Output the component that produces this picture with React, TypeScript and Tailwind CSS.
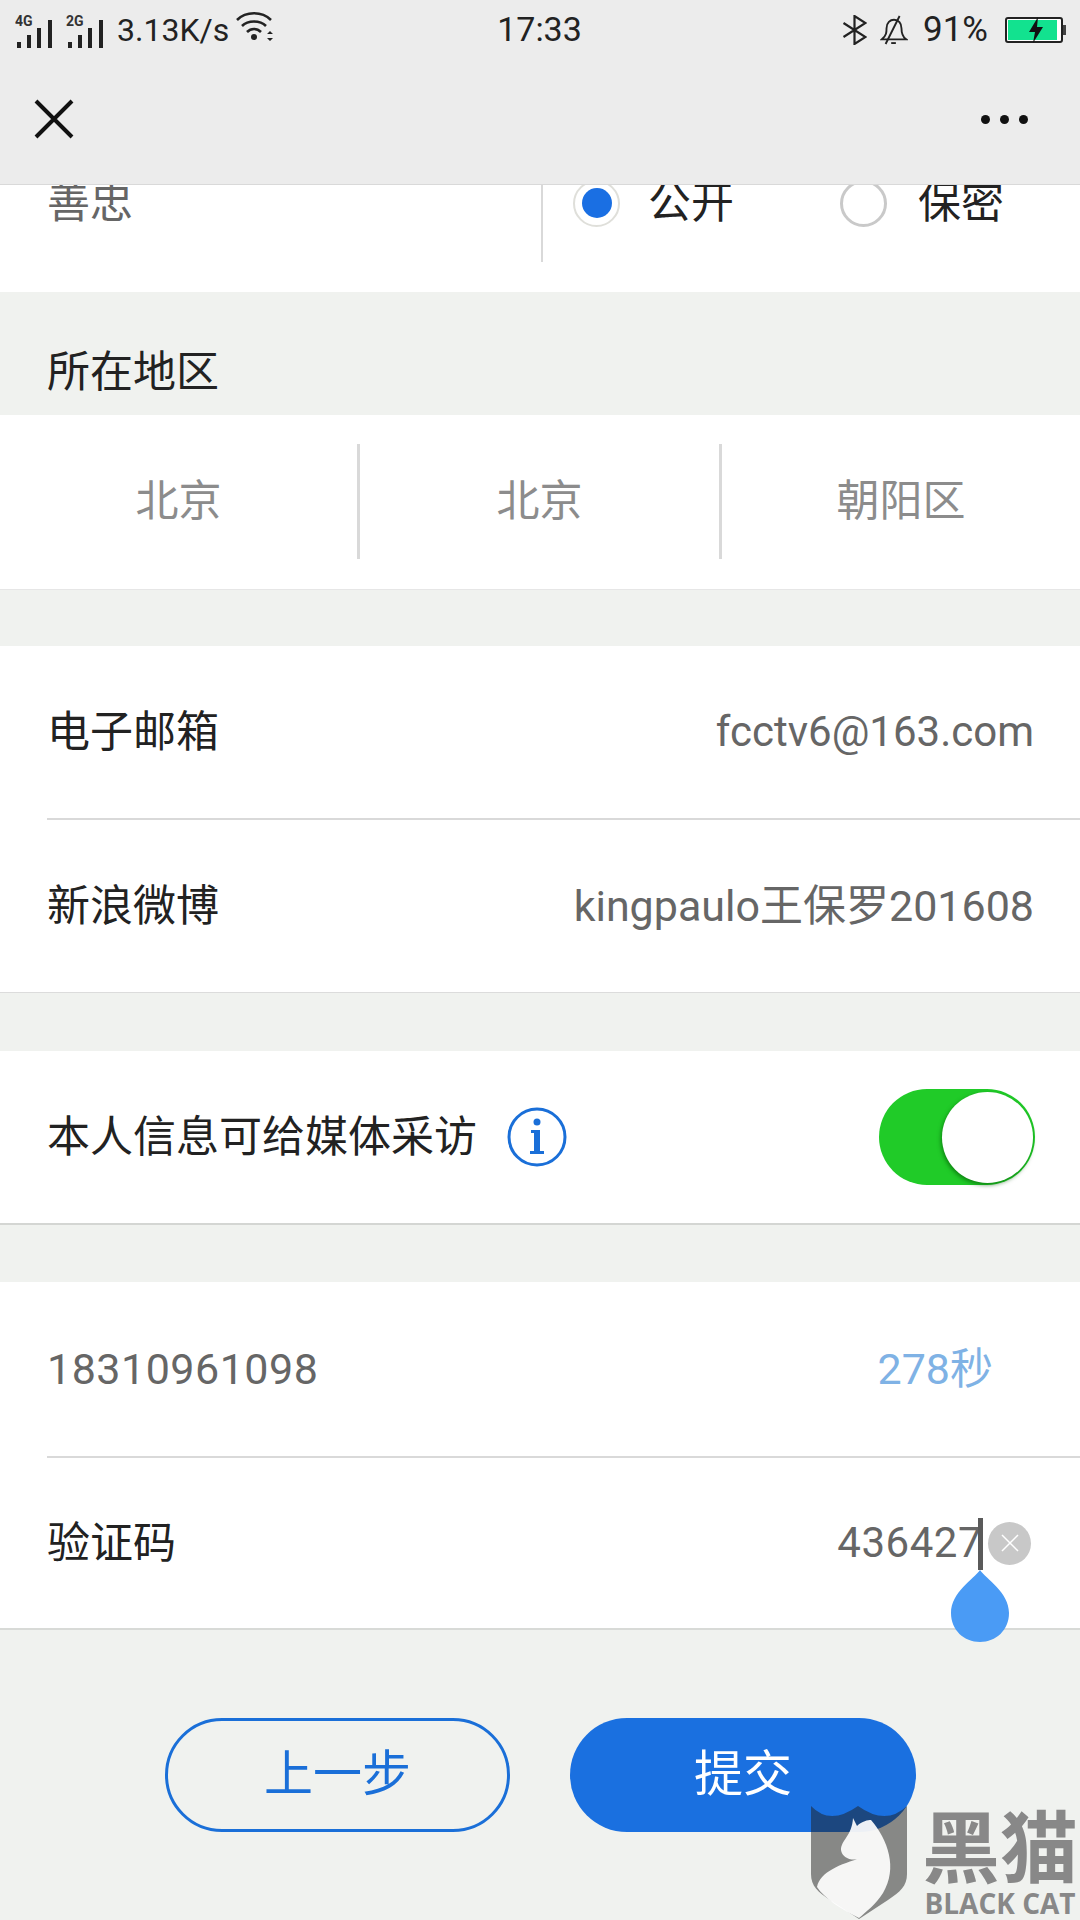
function SignalIcon({ label }: { label: string }) {
  return (
    <svg width="38" height="36" viewBox="0 0 38 36">
      <text x="0" y="14" fontSize="14" fontWeight="700" fontFamily="Roboto, sans-serif" fill="#333">
        {label}
      </text>
      <rect x="2" y="30" width="4" height="6" fill="#222" />
      <rect x="12" y="23" width="4" height="13" fill="#222" />
      <rect x="22" y="16" width="4" height="20" fill="#222" />
      <rect x="33" y="8" width="4" height="28" fill="#222" />
    </svg>
  )
}

function Row({ label, children }: { label: string; children: React.ReactNode }) {
  return (
    <div className="flex h-[172px] items-center justify-between pl-[47px] pr-[46px]">
      <span className="text-[#222]">{label}</span>
      {children}
    </div>
  )
}

export default function App() {
  return (
    <div className="relative flex h-[1920px] w-[1080px] flex-col overflow-hidden bg-[#f0f2ef] font-['Roboto','Noto_Sans_CJK_SC',sans-serif] text-[43px] leading-[60px]">
      {/* status + title bar */}
      <div className="z-10 flex h-[185px] flex-none flex-col border-b border-[#d9d9d9] bg-[#ececec]">
        <div className="flex h-[56px] items-center justify-between pl-[15px] pr-[14px] pt-[3px] text-[32px] leading-[40px] text-[#222]">
          <div className="flex w-[300px] items-center gap-[13px]">
            <SignalIcon label="4G" />
            <SignalIcon label="2G" />
            <span className="whitespace-nowrap text-[32px]">3.13K/s</span>
            <svg width="38" height="30" viewBox="0 0 38 30" className="-ml-[7px] -mt-2" fill="none" stroke="#222" strokeWidth="2.6">
              <path d="M2 9 C11 0 27 0 36 9" />
              <path d="M7 15 C13 9 25 9 31 15" />
              <path d="M12 21 C16 17 22 17 26 21" />
              <circle cx="19" cy="26" r="3" fill="#222" stroke="none" />
              <path d="M32 23 l3 -3 l3 3 z M32 27 l3 3 l3 -3 z" fill="#222" stroke="none" />
            </svg>
          </div>
          <span className="ml-[-78px] -mt-[1px] text-[34px]">17:33</span>
          <div className="flex items-center">
            <svg width="25" height="30" viewBox="0 0 24 30" fill="none" stroke="#222" strokeWidth="2.2">
              <path d="M1 8 L23 22 L12 29 L12 1 L23 8 L1 22" />
            </svg>
            <svg width="28" height="32" viewBox="0 0 30 32" className="ml-[13px]" fill="none" stroke="#222" strokeWidth="2">
              <path d="M2 26 C7 22 7 18 7 14 C7 8 11 5 15 5 C20 5 23 9 23 14 C23 19 24 23 28 26 Z" />
              <path d="M6 31 L21 1" />
              <path d="M12 30 h5" />
            </svg>
            <span className="ml-[15px] text-[35px]">91%</span>
            <div className="ml-[17px] flex items-center">
              <div className="relative flex h-[26px] w-[58px] items-center rounded-[3px] border-2 border-[#222] bg-white p-[1px]">
                <div className="h-full w-[49px] bg-[#12e28f]" />
                <svg width="18" height="26" viewBox="0 0 18 26" className="absolute left-[20px] -top-[2px]">
                  <path d="M11 0 L2 15 H8 L6 26 L16 10 H10 Z" fill="#111" />
                </svg>
              </div>
              <div className="h-[10px] w-[3px] bg-[#444]" />
            </div>
          </div>
        </div>
        <div className="flex flex-1 items-center justify-between pb-[2px] pl-[34px] pr-[52px]">
          <svg width="40" height="40" viewBox="0 0 40 40" stroke="#111" strokeWidth="4">
            <path d="M2 2 L38 38 M38 2 L2 38" />
          </svg>
          <div className="flex items-center gap-[10px]">
            <div className="h-[9px] w-[9px] rounded-full bg-[#111]" />
            <div className="h-[9px] w-[9px] rounded-full bg-[#111]" />
            <div className="h-[9px] w-[9px] rounded-full bg-[#111]" />
          </div>
        </div>
      </div>

      {/* name + privacy */}
      <div className="flex h-[107px] flex-none items-start overflow-hidden bg-white">
        <div className="-mt-[12px] w-[541px] pl-[47px] text-[#666]">善忠</div>
        <div className="h-[77px] w-[2px] bg-[#d9d9d9]" />
        <div className="-mt-[12px] flex items-center">
          <div className="ml-[30px] flex h-[47px] w-[47px] items-center justify-center rounded-full border-2 border-[#dfdfda]">
            <div className="h-[30px] w-[30px] rounded-full bg-[#1a6fe3]" />
          </div>
          <span className="ml-[28px] text-[#222]">公开</span>
          <div className="ml-[106px] h-[47px] w-[47px] rounded-full border-[3px] border-[#c9c9c9]" />
          <span className="ml-[31px] text-[#222]">保密</span>
        </div>
      </div>

      {/* region */}
      <div className="flex h-[123px] flex-none items-end pb-[13px] pl-[47px] text-[#222]">所在地区</div>
      <div className="flex h-[175px] flex-none items-center border-b border-[#e6e6e6] bg-white pb-[2px] text-[#8c8c8c]">
        <div className="flex h-[115px] w-[360px] items-center justify-center border-r-[3px] border-[#d9d9d9]">北京</div>
        <div className="flex h-[115px] w-[362px] items-center justify-center border-r-[3px] border-[#d9d9d9]">北京</div>
        <div className="flex h-[115px] flex-1 items-center justify-center">朝阳区</div>
      </div>

      <div className="h-[56px] flex-none" />

      {/* contact */}
      <div className="flex flex-none flex-col border-b border-[#dcdcdc] bg-white">
        <Row label="电子邮箱">
          <span className="text-[42px] text-[#666]">fcctv6@163.com</span>
        </Row>
        <div className="ml-[47px] h-[2px] bg-[#d9d9d9]" />
        <Row label="新浪微博">
          <span className="text-[#666]">kingpaulo王保罗201608</span>
        </Row>
      </div>

      <div className="h-[58px] flex-none" />

      {/* media toggle */}
      <div className="flex h-[174px] flex-none items-center border-b-2 border-[#d4d6d3] bg-white pl-[47px] pr-[45px]">
        <span className="text-[#222]">本人信息可给媒体采访</span>
        <svg width="60" height="60" viewBox="0 0 60 60" className="ml-[30px]">
          <circle cx="30" cy="30" r="28" fill="none" stroke="#1a6fd8" strokeWidth="3" />
          <circle cx="30" cy="15" r="3.5" fill="#1a6fd8" />
          <path d="M24 23 h9 v21 h4 v3 h-14 v-3 h4 v-18 h-3 z" fill="#1a6fd8" />
        </svg>
        <div className="ml-auto flex h-[96px] w-[156px] flex-none items-center justify-end rounded-full bg-[#20cb28] pr-[2px]">
          <div className="h-[91px] w-[91px] rounded-full bg-white shadow-[-1px_2px_4px_rgba(0,80,0,0.6)]" />
        </div>
      </div>

      <div className="h-[57px] flex-none" />

      {/* phone + code */}
      <div className="flex flex-none flex-col border-b-2 border-[#d8dad7] bg-white">
        <div className="flex h-[174px] items-center justify-between pl-[47px] pr-[87px]">
          <span className="tracking-[0.5px] text-[#666]">18310961098</span>
          <span className="text-[#7fb2e5]">278秒</span>
        </div>
        <div className="ml-[47px] h-[2px] bg-[#d9d9d9]" />
        <div className="flex h-[170px] items-center justify-between pl-[47px] pr-[49px]">
          <span className="text-[#222]">验证码</span>
          <div className="flex items-center">
            <span className="text-[42px] tracking-[0.5px] text-[#666]">436427</span>
            <div className="ml-[6px] flex h-[43px] w-[43px] items-center justify-center rounded-full bg-[#c8c8c8]">
              <svg width="18" height="18" viewBox="0 0 18 18" stroke="#fff" strokeWidth="1.5">
                <path d="M1 1 L17 17 M17 1 L1 17" />
              </svg>
            </div>
          </div>
        </div>
      </div>

      {/* text handle over the code field */}
      <div className="absolute left-[978px] top-[1518px] h-[52px] w-[5px] bg-[#5a5a5a]" />
      <svg width="60" height="73" viewBox="0 0 60 73" className="absolute left-[950px] top-[1570px]">
        <path d="M30 0 C36 9 59 22 59 43 C59 60 46 72 30 72 C14 72 1 60 1 43 C1 22 24 9 30 0 Z" fill="#4a9bf5" />
      </svg>

      {/* buttons */}
      <div className="flex flex-1 items-start pl-[165px] pt-[88px] text-[49px]">
        <div className="flex h-[114px] w-[345px] items-center justify-center rounded-full border-[3px] border-[#1a6fd8] text-[#1a6fd8]">
          上一步
        </div>
        <div className="ml-[60px] flex h-[114px] w-[346px] items-center justify-center rounded-full bg-[#1a70e0] text-white">
          提交
        </div>
      </div>

      {/* watermark */}
      <svg width="98" height="114" viewBox="0 0 98 114" className="absolute left-[810px] top-[1806px]">
        <path d="M1 0 Q20 20 48 0 Q76 20 97 0 V68 C97 80 90 86 78 94 L49 113 L20 94 C8 86 1 80 1 68 Z" fill="#1e1e1e" fillOpacity="0.5" />
        <path d="M43 12 L47 20 C52 15 58 14 61 14 C78 34 88 62 73 87 C66 98 56 106 49 112 C32 104 14 92 7 81 C10 66 30 58 52 52 C42 56 32 52 31 44 C31 34 42 30 43 12 Z" fill="#fff" fillOpacity="0.92" />
      </svg>
      <div className="absolute left-[920px] top-[1812px] flex w-[160px] flex-col items-center whitespace-nowrap font-bold text-[#888]">
        <span className="text-[78px] leading-[78px]">黑猫</span>
        <span className="font-['Open_Sans',sans-serif] text-[28px] leading-[26px]">BLACK CAT</span>
      </div>
    </div>
  )
}
